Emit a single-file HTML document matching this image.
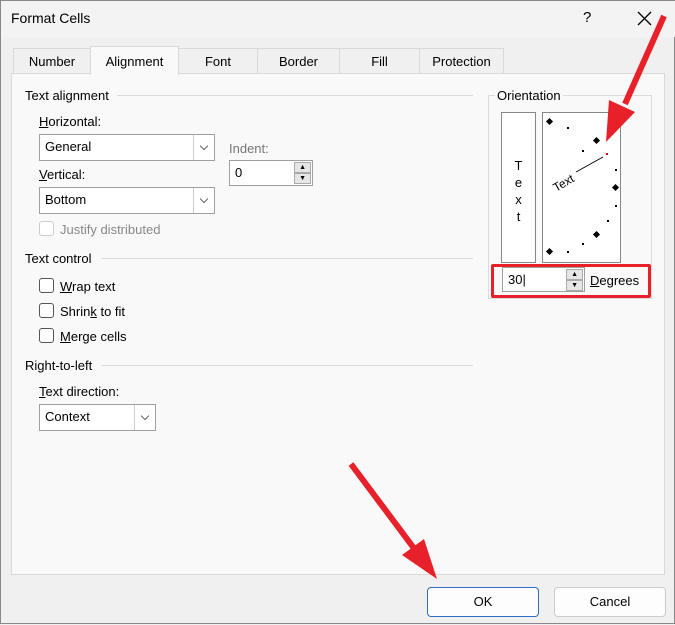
<!DOCTYPE html>
<html><head><style>
*{box-sizing:border-box}
body{margin:0;width:675px;height:624px;background:#f0f0f0;font-family:"Liberation Sans",sans-serif;font-size:13px;color:#000;position:relative;overflow:hidden;border:1px solid #888}
.a{position:absolute}
.tab{position:absolute;top:47px;height:26px;border:1px solid #d9d9d9;border-bottom:none;background:#f0f0f0;text-align:center;line-height:26px}
.panel{position:absolute;left:10px;top:72px;width:654px;height:502px;background:#f9f9f9;border:1px solid #d9d9d9}
.gl{position:absolute;height:1px;background:#dcdcdc}
.box{position:absolute;background:#fff;border:1px solid #a0a0a0;padding-left:5px;line-height:24px}
.dd{position:absolute;right:0;top:0;width:21px;height:100%;border-left:1px solid #ccc}
.dd:after{content:"";position:absolute;left:7px;top:8px;width:5px;height:5px;border-right:1px solid #666;border-bottom:1px solid #666;transform:rotate(45deg)}
.cb{position:absolute;width:15px;height:15px;border:1px solid #555;border-radius:3px;background:#fff}
.u{text-decoration:underline}
.btn{position:absolute;height:30px;border:1px solid #ccc;border-radius:4px;background:#fdfdfd;text-align:center;line-height:28px}
.spin{position:absolute;right:0;width:17px;height:11px;background:#e6e6e6;border:1px solid #aaa}
</style></head><body>
<div class="a" style="left:0;top:0;width:675px;height:36px;background:#f3f3f3"></div>
<div class="a" style="left:10px;top:9px;font-size:14px">Format Cells</div>
<div class="a" style="left:582px;top:8px;font-size:15px">?</div>
<svg class="a" style="left:636px;top:10px" width="16" height="16"><path d="M1 1L14 14M14 1L1 14" stroke="#000" stroke-width="1.3"/></svg>

<div class="tab" style="left:12px;width:78px">Number</div>
<div class="tab" style="left:177px;width:80px">Font</div>
<div class="tab" style="left:256px;width:83px">Border</div>
<div class="tab" style="left:338px;width:81px">Fill</div>
<div class="tab" style="left:418px;width:85px">Protection</div>
<div class="panel"></div>
<div class="tab" style="left:89px;top:45px;width:89px;height:29px;background:#f9f9f9;line-height:29px;z-index:2">Alignment</div>

<div class="a" style="left:24px;top:87px">Text alignment</div>
<div class="gl" style="left:116px;top:94px;width:356px"></div>
<div class="a" style="left:38px;top:113px"><span class="u">H</span>orizontal:</div>
<div class="box" style="left:38px;top:133px;width:176px;height:27px">General<div class="dd"></div></div>
<div class="a" style="left:228px;top:140px;color:#777">Indent:</div>
<div class="box" style="left:228px;top:159px;width:84px;height:26px">0
<div class="spin" style="top:1px;right:1px"></div><div class="spin" style="top:12px;right:1px"></div>
<div class="a" style="right:6px;top:3px;font-size:7px;line-height:7px">▲</div><div class="a" style="right:6px;top:14px;font-size:7px;line-height:7px">▼</div></div>
<div class="a" style="left:38px;top:166px"><span class="u">V</span>ertical:</div>
<div class="box" style="left:38px;top:186px;width:176px;height:27px">Bottom<div class="dd"></div></div>
<div class="cb" style="left:38px;top:220px;border-color:#ccc"></div>
<div class="a" style="left:59px;top:221px;color:#888">Justify distributed</div>

<div class="a" style="left:24px;top:250px">Text control</div>
<div class="gl" style="left:100px;top:257px;width:372px"></div>
<div class="cb" style="left:38px;top:277px"></div><div class="a" style="left:59px;top:278px"><span class="u">W</span>rap text</div>
<div class="cb" style="left:38px;top:302px"></div><div class="a" style="left:59px;top:303px">Shrin<span class="u">k</span> to fit</div>
<div class="cb" style="left:38px;top:327px"></div><div class="a" style="left:59px;top:328px"><span class="u">M</span>erge cells</div>

<div class="a" style="left:24px;top:357px">Right-to-left</div>
<div class="gl" style="left:100px;top:364px;width:372px"></div>
<div class="a" style="left:38px;top:383px"><span class="u">T</span>ext direction:</div>
<div class="box" style="left:38px;top:403px;width:117px;height:27px">Context<div class="dd"></div></div>

<div class="a" style="left:487px;top:94px;width:164px;height:204px;border:1px solid #dcdcdc"></div>
<div class="a" style="left:494px;top:87px;background:#f9f9f9;padding:0 2px">Orientation</div>
<div class="a" style="left:500px;top:111px;width:35px;height:151px;border:1px solid #888;background:#fff;text-align:center;line-height:17px;padding-top:44px">T<br>e<br>x<br>t</div>
<div class="a" style="left:541px;top:111px;width:79px;height:151px;border:1px solid #888;background:#fff"></div>
<svg class="a" style="left:541px;top:111px" width="79" height="151">
<g fill="#000">
<rect x="5" y="7" width="5" height="5" transform="rotate(45 7.5 9.5)"/>
<rect x="52" y="26" width="5" height="5" transform="rotate(45 54.5 28.5)"/>
<rect x="71" y="73" width="5" height="5" transform="rotate(45 73.5 75.5)"/>
<rect x="52" y="120" width="5" height="5" transform="rotate(45 54.5 122.5)"/>
<rect x="5" y="137" width="5" height="5" transform="rotate(45 7.5 139.5)"/>
<rect x="25" y="15" width="2" height="2"/><rect x="40" y="38" width="2" height="2"/>
<rect x="73" y="57" width="2" height="2"/><rect x="73" y="93" width="2" height="2"/>
<rect x="65" y="108" width="2" height="2"/><rect x="40" y="131" width="2" height="2"/><rect x="25" y="139" width="2" height="2"/>
</g>
<rect x="64" y="41" width="2" height="2" fill="#e00"/>
<line x1="34" y1="60" x2="61" y2="45" stroke="#000" stroke-width="1"/>
<text x="14" y="80" font-size="12" font-family="Liberation Sans" transform="rotate(-30 14 80)">Text</text>
</svg>
<div class="box" style="left:501px;top:266px;width:83px;height:25px">30|
<div class="spin" style="top:1px;right:1px"></div><div class="spin" style="top:12px;right:1px"></div>
<div class="a" style="right:6px;top:3px;font-size:7px;line-height:7px">▲</div><div class="a" style="right:6px;top:14px;font-size:7px;line-height:7px">▼</div></div>
<div class="a" style="left:589px;top:272px"><span class="u">D</span>egrees</div>
<div class="a" style="left:490px;top:263px;width:160px;height:34px;border:3px solid #e8202a;border-radius:2px"></div>

<div class="btn" style="left:426px;top:586px;width:112px;border:1px solid #2f6fc0">OK</div>
<div class="btn" style="left:553px;top:586px;width:112px">Cancel</div>

<svg class="a" style="left:0;top:0" width="675" height="624">
<g fill="#e8202a" stroke="#e8202a">
<line x1="663" y1="15" x2="624" y2="103" stroke-width="6"/>
<polygon points="605,141 608,99 634,111" stroke="none"/>
<line x1="350" y1="463" x2="415" y2="550" stroke-width="6"/>
<polygon points="436,578 401,554 423,538" stroke="none"/>
</g>
</svg>
</body></html>
